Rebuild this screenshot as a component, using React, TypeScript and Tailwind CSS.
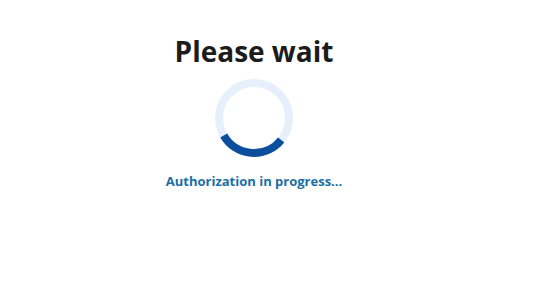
export default function App() {
  return (
    <div className="w-[550px] h-[292px] bg-white" style={{ fontFamily: '"Open Sans", "Noto Sans", sans-serif' }}>
      <div className="w-[508px] flex flex-col items-center pt-[33px]">
        <h1 className="text-[28px] leading-[36px] font-bold text-[#1c1c1c]">Please wait</h1>
        <svg width="80" height="80" viewBox="0 0 80 80" className="mt-[9px]">
          <circle cx="40" cy="40" r="35" fill="none" stroke="#e6f0fb" strokeWidth="8" />
          <path d="M 9.7 57.5 A 35 35 0 0 0 67.2 62" fill="none" stroke="#0b4f9c" strokeWidth="8" />
        </svg>
        <p className="mt-[14px] text-[13px] leading-[18px] font-bold text-[#1a6fa5]">Authorization in progress...</p>
      </div>
    </div>
  );
}
